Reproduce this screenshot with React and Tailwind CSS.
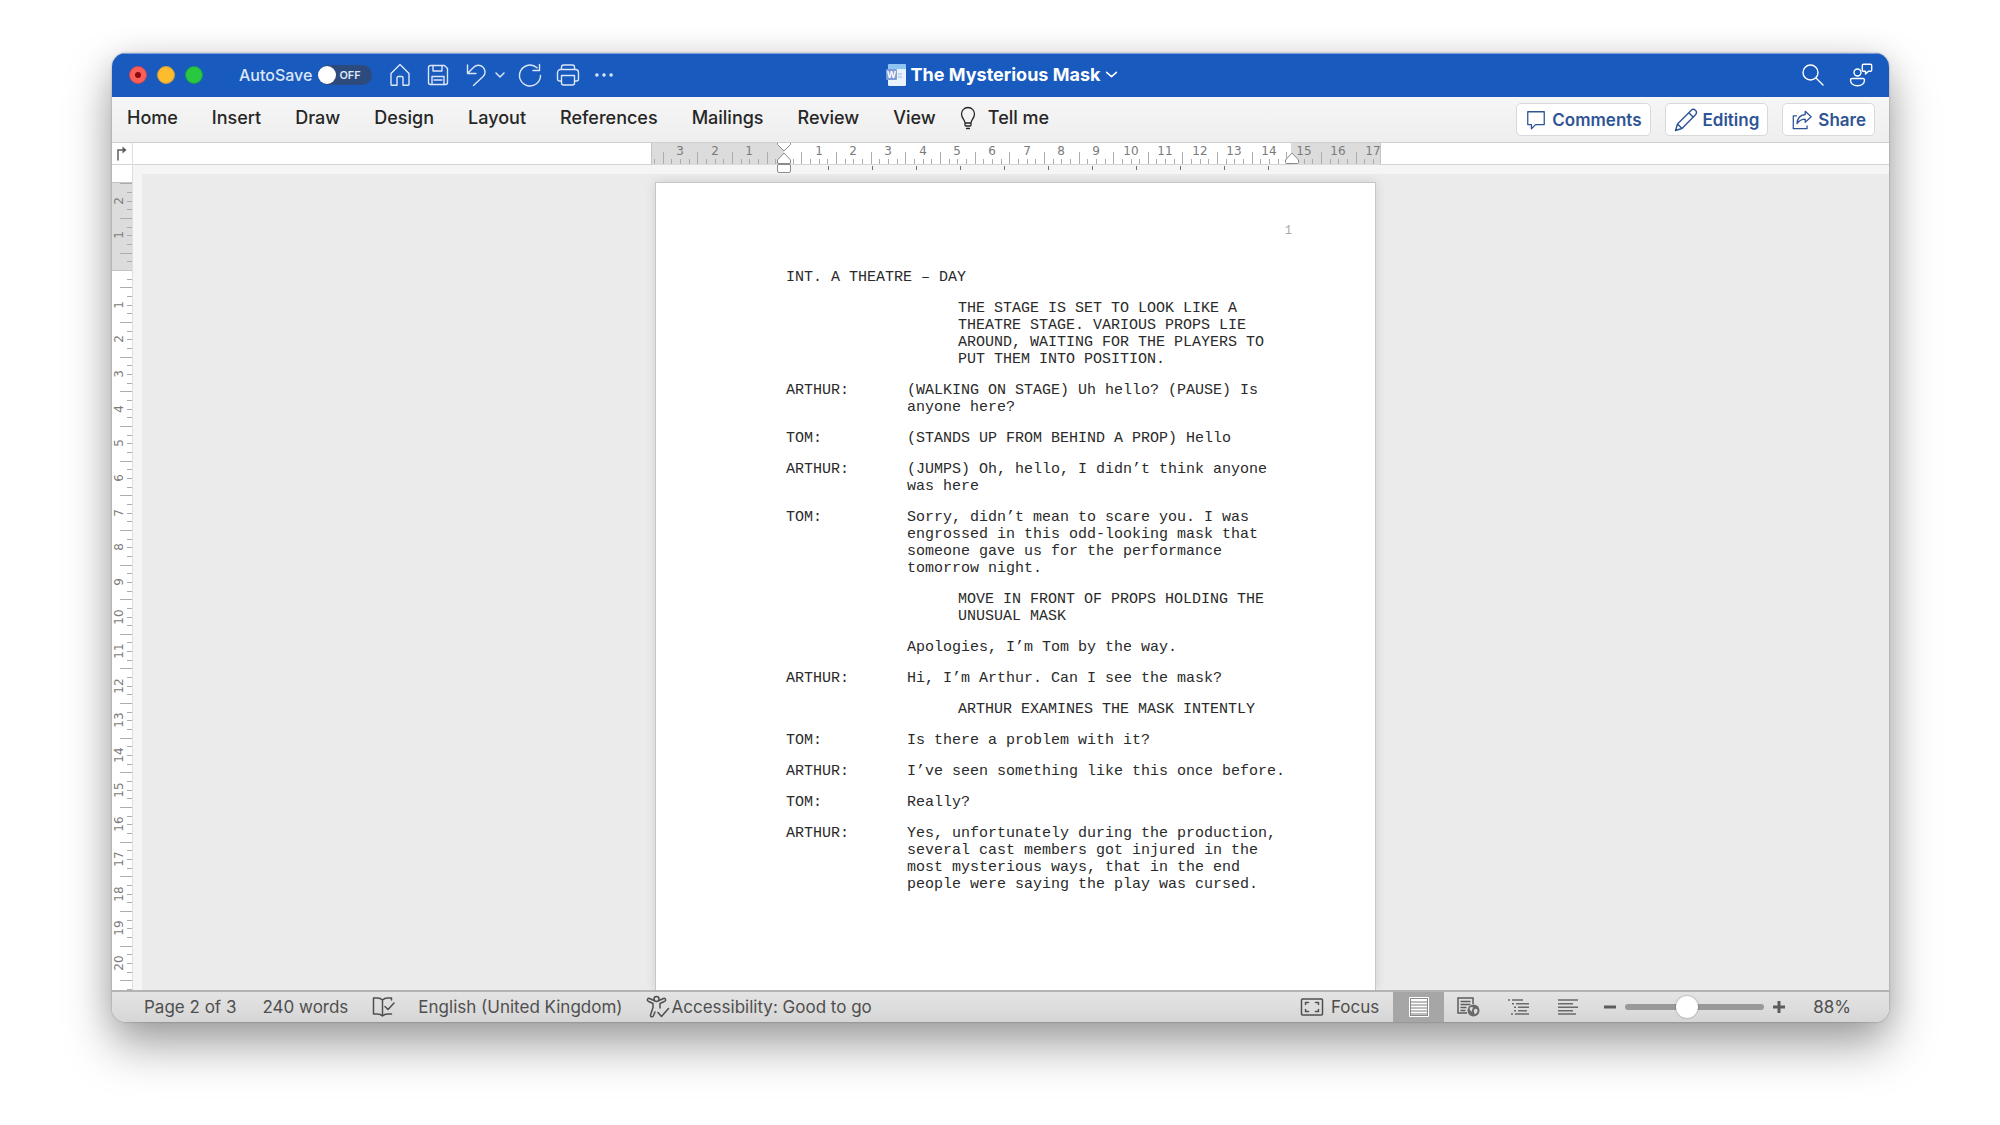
import React, { useState } from 'react';
import clsx from 'clsx';

const CM = 34.65; // one centimetre at 88% zoom
const TAB_STOP = 44;

const tabs = [
  'Home',
  'Insert',
  'Draw',
  'Design',
  'Layout',
  'References',
  'Mailings',
  'Review',
  'View',
];

const script = [
  { type: 'heading', text: 'INT. A THEATRE – DAY' },
  {
    type: 'direction',
    text: 'THE STAGE IS SET TO LOOK LIKE A\nTHEATRE STAGE. VARIOUS PROPS LIE\nAROUND, WAITING FOR THE PLAYERS TO\nPUT THEM INTO POSITION.',
  },
  {
    type: 'line',
    who: 'ARTHUR:',
    text: '(WALKING ON STAGE) Uh hello? (PAUSE) Is\nanyone here?',
  },
  { type: 'line', who: 'TOM:', text: '(STANDS UP FROM BEHIND A PROP) Hello' },
  {
    type: 'line',
    who: 'ARTHUR:',
    text: '(JUMPS) Oh, hello, I didn’t think anyone\nwas here',
  },
  {
    type: 'line',
    who: 'TOM:',
    text: 'Sorry, didn’t mean to scare you. I was\nengrossed in this odd-looking mask that\nsomeone gave us for the performance\ntomorrow night.',
  },
  {
    type: 'direction',
    text: 'MOVE IN FRONT OF PROPS HOLDING THE\nUNUSUAL MASK',
  },
  { type: 'line', who: '', text: 'Apologies, I’m Tom by the way.' },
  { type: 'line', who: 'ARTHUR:', text: 'Hi, I’m Arthur. Can I see the mask?' },
  { type: 'direction', text: 'ARTHUR EXAMINES THE MASK INTENTLY' },
  { type: 'line', who: 'TOM:', text: 'Is there a problem with it?' },
  {
    type: 'line',
    who: 'ARTHUR:',
    text: 'I’ve seen something like this once before.',
  },
  { type: 'line', who: 'TOM:', text: 'Really?' },
  {
    type: 'line',
    who: 'ARTHUR:',
    text: 'Yes, unfortunately during the production,\nseveral cast members got injured in the\nmost mysterious ways, that in the end\npeople were saying the play was cursed.',
  },
];

// Outline icon on a 24 grid
const Icon = ({ size = 24, stroke = 1.4, className, children }) => (
  <svg
    width={size}
    height={size}
    viewBox="0 0 24 24"
    fill="none"
    stroke="currentColor"
    strokeWidth={stroke}
    strokeLinecap="round"
    strokeLinejoin="round"
    className={clsx('shrink-0', className)}
    aria-hidden="true"
  >
    {children}
  </svg>
);

const IconButton = ({ label, className, children }) => (
  <button type="button" aria-label={label} className={clsx('flex items-center', className)}>
    {children}
  </button>
);

const TitleBar = ({ autoSave, setAutoSave }) => (
  <header className="grid h-[44px] shrink-0 grid-cols-[1fr_auto_1fr] items-center border-t border-[#7fa0dc] bg-[#185abd] pb-[2px] text-white">
    <div className="flex items-center">
      <div className="flex gap-[10px] pl-[17px]">
        <button
          type="button"
          aria-label="Close"
          className="flex size-[18px] items-center justify-center rounded-full border border-[#c9474f] bg-[#fc5f5a]"
        >
          <span className="size-[6px] rounded-full bg-[#8b0a0a]" />
        </button>
        <button
          type="button"
          aria-label="Minimise"
          className="size-[18px] rounded-full border border-[#c99a3f] bg-[#fdbc2e]"
        />
        <button
          type="button"
          aria-label="Zoom window"
          className="size-[18px] rounded-full border border-[#1d9a50] bg-[#29c840]"
        />
      </div>

      <label className="ml-9 flex items-center gap-[6px] text-[16px] leading-5 font-medium text-[#dbe6f8]">
        AutoSave
        <span className="relative flex items-center">
          <input
            type="checkbox"
            checked={autoSave}
            onChange={(e) => setAutoSave(e.target.checked)}
            className="h-[20px] w-[54px] appearance-none rounded-full bg-[#2d4a7c] before:block before:size-[18px] before:translate-y-px before:rounded-full before:bg-white checked:before:translate-x-[36px]"
          />
          <span className="pointer-events-none absolute left-[21px] text-[11px] leading-4 font-semibold">
            {autoSave ? 'ON' : 'OFF'}
          </span>
        </span>
      </label>

      <div className="ml-4 flex items-center gap-[14px] text-[#dbe6f8]">
        <IconButton label="Home">
          <Icon>
            <path d="M3 10.6 12 1.6l9 9V21.4a.8.8 0 0 1-.8.8H15v-7.4a1.3 1.3 0 0 0-1.3-1.3h-3.4A1.3 1.3 0 0 0 9 14.8V22.2H3.8a.8.8 0 0 1-.8-.8z" />
          </Icon>
        </IconButton>
        <IconButton label="Save">
          <Icon>
            <path d="M2.5 4.5a2 2 0 0 1 2-2h14l3 3v14a2 2 0 0 1-2 2h-15a2 2 0 0 1-2-2z" />
            <path d="M7 2.5v5.500h9V2.5M6 21.5v-8h12v8M8 17h8" />
          </Icon>
        </IconButton>
        <div className="flex items-center gap-[6px]">
          <IconButton label="Undo">
            <Icon>
              <path d="M3.5 2v8.5H12M3.7 10.2l6-6a6.6 6.6 0 0 1 9.4 9.4L9.5 22.5" />
            </Icon>
          </IconButton>
          <IconButton label="Undo history">
            <Icon size={12} stroke={3}>
              <path d="m4 8 8 8 8-8" />
            </Icon>
          </IconButton>
        </div>
        <IconButton label="Repeat" className="-ml-[2px]">
          <Icon>
            <path d="M22.5 12.5A10.5 10.5 0 1 1 19 4.7M21.5 1.5v6H15" />
          </Icon>
        </IconButton>
        <IconButton label="Print">
          <Icon>
            <path d="M5.5 6.5V4a2 2 0 0 1 2-2h9a2 2 0 0 1 2 2v2.5M5.5 18H3.5a2 2 0 0 1-2-2V9.5a3 3 0 0 1 3-3h15a3 3 0 0 1 3 3V16a2 2 0 0 1-2 2h-2" />
            <path d="M5.5 12.5h13V20a2 2 0 0 1-2 2h-9a2 2 0 0 1-2-2z" />
          </Icon>
        </IconButton>
        <IconButton label="More">
          <Icon size={20} className="fill-current">
            <circle cx="3.5" cy="12" r="1.4" />
            <circle cx="12" cy="12" r="1.4" />
            <circle cx="20.5" cy="12" r="1.4" />
          </Icon>
        </IconButton>
      </div>
    </div>

    <button type="button" className="flex items-center gap-[5px] pl-[3px]">
      <svg width="20" height="22" viewBox="0 0 20 22" className="shrink-0" aria-hidden="true">
        <rect x="2" y="0" width="18" height="22" rx="1.5" fill="#e9f3fd" />
        <path d="M3.5 0h15A1.5 1.5 0 0 1 20 1.5V5H2V1.5A1.5 1.5 0 0 1 3.5 0z" fill="#8fc3f2" />
        <path d="M12 10h4M12 13h4" stroke="#9db8e6" strokeWidth="1.2" />
        <rect x="0" y="5" width="11" height="11" rx="1" fill="#7f9bd8" />
        <text x="5.5" y="14" textAnchor="middle" fontSize="9" fontWeight="700" fill="#fff">
          W
        </text>
      </svg>
      <h1 className="text-[18px] leading-6 font-bold">The Mysterious Mask</h1>
      <Icon size={13} stroke={2.8}>
        <path d="m3 8 9 8 9-8" />
      </Icon>
    </button>

    <div className="flex items-center justify-end gap-6 pr-4">
      <IconButton label="Search">
        <Icon>
          <circle cx="9.5" cy="9.5" r="7.5" />
          <path d="m15 15 7 7" />
        </Icon>
      </IconButton>
      <IconButton label="Share presence">
        <Icon>
          <circle cx="8.5" cy="9.5" r="3.5" />
          <path d="M3 15.5h11a1.5 1.5 0 0 1 1.5 1.5c0 3.5-3 5.8-7 5.8S1.5 20.5 1.5 17A1.5 1.5 0 0 1 3 15.5z" />
          <path d="M14.5 1.2h7a1.2 1.2 0 0 1 1.2 1.2V7a1.2 1.2 0 0 1-1.2 1.2h-2L16.5 11V8.2h-2A1.2 1.2 0 0 1 13.3 7V2.4a1.2 1.2 0 0 1 1.2-1.2z" />
        </Icon>
      </IconButton>
    </div>
  </header>
);

const ActionButton = ({ icon, children }) => (
  <button
    type="button"
    className="flex h-[33px] items-center gap-[5px] rounded-[5px] border border-[#d9d9d9] bg-white px-2 text-[17px] leading-5 font-semibold text-[#2f5496]"
  >
    {icon}
    {children}
  </button>
);

const Ribbon = () => (
  <nav className="flex h-[45px] shrink-0 items-center justify-between bg-linear-to-b from-[#f6f6f6] to-[#eeeeee] pr-[14px] pl-[15px] text-[18px] leading-6 font-medium text-[#262626]">
    <div className="flex items-center gap-[34px] pb-1">
      {tabs.map((tab) => (
        <button key={tab} type="button">
          {tab}
        </button>
      ))}
      <button type="button" className="-ml-[14px] flex items-center gap-2">
        <Icon stroke={1.3}>
          <path d="M9 17c0-3-3.500-4.500-3.500-9a6.500 6.500 0 0 1 13 0c0 4.500-3.500 6-3.500 9v2a1 1 0 0 1-1 1h-4a1 1 0 0 1-1-1zM9 17h6M10.500 22.500h3" />
        </Icon>
        Tell me
      </button>
    </div>

    <div className="flex items-center gap-[14px]">
      <ActionButton
        icon={
          <Icon size={22}>
            <path d="M3 3h18v14h-9.500L7 21.500V17H3z" />
          </Icon>
        }
      >
        Comments
      </ActionButton>
      <ActionButton
        icon={
          <Icon size={24}>
            <path d="M1.500 22.500 3.500 16 17 2.500a2.800 2.800 0 0 1 4.500 4.200L8 20.500zM14.800 4.700l4.500 4.500M3.500 16l4.500 4.500" />
          </Icon>
        }
      >
        Editing
      </ActionButton>
      <ActionButton
        icon={
          <Icon size={22}>
            <path d="M6 7.500H2.500v14h15v-3" />
            <path d="M15.500 2.500 22 8.500l-6.500 6v-3.500c-4 0-6.500 1.500-9 5 .5-6 3.500-9.500 9-10z" />
          </Icon>
        }
      >
        Share
      </ActionButton>
    </div>
  </nav>
);

const range = (from, to) => Array.from({ length: to - from + 1 }, (_, i) => from + i);

const HorizontalRuler = () => {
  const zero = 133;
  const quarters = range(-15, 68);
  return (
    <svg width="729" height="32" className="shrink-0 self-start overflow-visible" aria-hidden="true">
      <rect width={zero} height="22" fill="#dcdcdc" />
      <rect x="640" width="90" height="22" fill="#dcdcdc" />
      <path d="M.5 0v22M729.5 0v22" stroke="#c4c4c4" />
      {quarters.map((q) => {
        const long = q % 4 === 2 || q % 4 === -2;
        const x = Math.round(zero + (q * CM) / 4);
        return (
          q !== 0 && <rect key={q} x={x} y={long ? 9 : 16} width="1" height={long ? 12 : 5} fill="#adadad" />
        );
      })}
      {range(-3, 17)
        .filter((n) => n !== 0)
        .map((n) => (
          <text
            key={n}
            x={Math.round(zero + n * CM)}
            y="12"
            textAnchor="middle"
            fontSize="12"
            fill="#7b7b7b"
            className="font-['DejaVu_Sans',sans-serif]"
          >
            {Math.abs(n)}
          </text>
        ))}
      {range(1, 11).map((n) => (
        <rect key={n} x={zero + n * TAB_STOP} y="23" width="1" height="4" fill="#6e6e6e" />
      ))}
      {/* indent markers */}
      <g fill="#fff" stroke="#8a8a8a">
        <path d="M126.500 0v1.500l6.500 6.500 6.500-6.500V0" />
        <path d="M133 10l6.500 7v3.500h-13V17z" />
        <rect x="126.500" y="21.500" width="13" height="8" rx="1.500" />
        <path d="M641 10l6.500 7v2.500a1 1 0 0 1-1 1h-11a1 1 0 0 1-1-1V17z" />
      </g>
    </svg>
  );
};

const VerticalRuler = () => {
  const zero = 88;
  return (
    <svg width="21" height="820" className="shrink-0" aria-hidden="true">
      <rect width="21" height="88" fill="#dcdcdc" />
      <path d="M0 .5h21M0 88.500h21" stroke="#c4c4c4" />
      {range(-10, 84).map((q) => {
        const long = q % 4 === 2 || q % 4 === -2;
        return (
          q !== 0 && (
            <rect
              key={q}
              x={long ? 8 : 15}
              y={Math.round(zero + (q * CM) / 4)}
              width={long ? 12 : 5}
              height="1"
              fill="#adadad"
            />
          )
        );
      })}
      {range(-2, 20)
        .filter((n) => n !== 0)
        .map((n) => {
          const y = Math.round(zero + n * CM);
          return (
            <text
              key={n}
              x="11"
              y={y}
              transform={`rotate(-90 11 ${y})`}
              textAnchor="middle"
              fontSize="12"
              fill="#7b7b7b"
              className="font-['DejaVu_Sans',sans-serif]"
            >
              {Math.abs(n)}
            </text>
          );
        })}
    </svg>
  );
};

const Page = () => (
  <article className="w-[721px] shrink-0 border border-b-0 border-[#c6c6c6] bg-white pt-[40px] pr-[83px] pl-[130px] font-['Liberation_Mono',monospace] text-[15px] leading-[17px] text-[#2a2a2a] shadow-[0_0_10px_rgba(0,0,0,0.12)]">
    <p className="text-right text-[12px] text-[#a8a8a8]">1</p>
    <div className="mt-[29px] flex flex-col gap-[14px] whitespace-pre">
      {script.map((item, i) => {
        if (item.type === 'heading') return <h2 key={i}>{item.text}</h2>;
        if (item.type === 'direction')
          return (
            <p key={i} className="pl-[172px]">
              {item.text}
            </p>
          );
        return (
          <div key={i} className="flex">
            <p className="w-[121px] shrink-0">{item.who}</p>
            <p>{item.text}</p>
          </div>
        );
      })}
    </div>
  </article>
);

const Workspace = () => (
  <main className="flex min-h-0 flex-1 border-t border-[#cfcfcf]">
    {/* tab selector + vertical ruler */}
    <div className="flex w-[21px] shrink-0 flex-col overflow-hidden border-r border-[#dedede] bg-white">
      <button
        type="button"
        aria-label="Tab selector"
        className="flex h-[22px] w-full shrink-0 items-center justify-center border-b border-[#d4d4d4]"
      >
        <svg width="10" height="15" viewBox="0 0 10 15" fill="none" stroke="#5c5c5c" aria-hidden="true">
          <path d="M1 14.500V4h5" strokeWidth="1.500" />
          <path d="M5.500.5 9.500 4l-4 3.500z" fill="#5c5c5c" stroke="none" />
        </svg>
      </button>
      <div className="mt-[17px] flex min-h-0 flex-1 flex-col overflow-hidden">
        <VerticalRuler />
      </div>
    </div>

    <div className="flex min-w-0 flex-1 flex-col bg-[#f5f5f5]">
      <div className="flex h-[22px] shrink-0 justify-center border-b border-[#d4d4d4] bg-white pl-[9px]">
        <HorizontalRuler />
      </div>
      <div className="mt-[9px] ml-[9px] flex min-h-0 flex-1 justify-center overflow-hidden bg-[#ebebeb] pt-2">
        <Page />
      </div>
    </div>
  </main>
);

const StatusBar = ({ zoom, setZoom }) => (
  <footer className="flex h-[32px] shrink-0 items-center justify-between border-t-2 border-[#b4b4b4] bg-linear-to-b from-[#e4e4e4] to-[#d6d6d6] text-[17px] leading-5 text-[#4f4f4f]">
    <div className="flex items-center pl-8">
      <button type="button">Page 2 of 3</button>
      <button type="button" className="ml-[26px]">
        240 words
      </button>
      <IconButton label="Proofing" className="ml-[23px]">
        <Icon stroke={1.5}>
          <path d="M11.500 5c-1.500-1.500-3-2-5-2h-4v16h4c2 0 3.500.5 5 2 1.500-1.500 3-2 5-2h4M11.500 5v16M11.500 5c1.500-1.500 3-2 5-2h4v2M14 11.500l3 3 6-6.500" />
        </Icon>
      </IconButton>
      <button type="button" className="ml-[23px]">
        English (United Kingdom)
      </button>
      <button type="button" className="ml-[23px] flex items-center gap-[2px]">
        <Icon stroke={1.5}>
          <circle cx="10.500" cy="4" r="2.500" />
          <path d="M8 5.500 3.500 3.500a1.500 1.500 0 0 0-1.300 2.700L7 8.500v4L4.500 20a1.500 1.500 0 0 0 2.800 1L9 17M13 5.500l4.500-2a1.500 1.500 0 0 1 1.300 2.700L14 8.500V13M12 17.500l3.500 4 7-8" />
        </Icon>
        Accessibility: Good to go
      </button>
    </div>

    <div className="flex h-full items-center pr-[38px]">
      <button type="button" className="flex items-center gap-[7px] pr-[14px]">
        <Icon size={24} stroke={1.5}>
          <rect x="1.500" y="4" width="21" height="16" rx="1" />
          <path d="M5.500 9.500v-2h3M15.500 7.500h3v2M5.500 14.500v2h3M15.500 16.500h3v-2" />
        </Icon>
        Focus
      </button>
      <button
        type="button"
        aria-label="Print layout"
        aria-pressed="true"
        className="flex h-full w-[51px] items-center justify-center bg-[#a6a6a6]"
      >
        <svg width="20" height="20" viewBox="0 0 20 20" aria-hidden="true">
          <rect x="0" y="0" width="20" height="20" rx="1" fill="#fff" />
          <rect x="1.500" y="1.500" width="17" height="17" fill="none" stroke="#8a8a8a" />
          <path d="M2 5h16M2 8h16M2 11h16M2 14h16M2 17h16" stroke="#7a7a7a" />
        </svg>
      </button>
      <IconButton label="Web layout" className="ml-[13px]">
        <svg width="23" height="20" viewBox="0 0 23 20" fill="none" stroke="#5c5c5c" aria-hidden="true">
          <path d="M10 16H1V1h15v6" strokeWidth="1.500" />
          <path d="M3.500 4.500h10M3.500 7.500h10M3.500 10.500h6M3.500 13.500h5" strokeWidth="1.300" />
          <circle cx="16.500" cy="13.500" r="6" fill="#6a6a6a" stroke="none" />
          <path d="M13 10.500c1.500-1 3-.5 3 .5s-1.500 1-1 2.500-1 1-1.500 0-1.500-2-.5-3zM18 12c1.500-.5 2.500.5 2.500 2s-1.500 3-2.500 3-.5-1.500-1-2.500 0-2 1-2.500z" fill="#dcdcdc" stroke="none" />
        </svg>
      </IconButton>
      <IconButton label="Outline" className="ml-7">
        <svg width="21" height="16" viewBox="0 0 21 16" stroke="#6a6a6a" strokeWidth="1.600" aria-hidden="true">
          <path d="M0 1h2M4 1h11M4 4.700h2M8 4.700h13M6 8.300h2M10 8.300h11M6 11.700h2M10 11.700h9M3 15h2M7 15h14" />
        </svg>
      </IconButton>
      <IconButton label="Draft" className="ml-[29px]">
        <svg width="20" height="16" viewBox="0 0 20 16" stroke="#6a6a6a" strokeWidth="1.600" aria-hidden="true">
          <path d="M0 1h20M0 4.700h15M0 8.300h20M0 11.700h15M0 15h18" />
        </svg>
      </IconButton>
      <IconButton label="Zoom out" className="ml-[26px]">
        <svg width="12" height="12" viewBox="0 0 12 12" stroke="#5c5c5c" strokeWidth="3" aria-hidden="true">
          <path d="M0 6h12" />
        </svg>
      </IconButton>
      <input
        type="range"
        aria-label="Zoom"
        min="10"
        max="190"
        value={zoom}
        onChange={(e) => setZoom(Number(e.target.value))}
        className="mx-[9px] h-[24px] w-[139px] appearance-none bg-transparent [&::-webkit-slider-runnable-track]:h-[6px] [&::-webkit-slider-runnable-track]:rounded-full [&::-webkit-slider-runnable-track]:bg-[#999999] [&::-webkit-slider-thumb]:mt-[-8px] [&::-webkit-slider-thumb]:size-[22px] [&::-webkit-slider-thumb]:appearance-none [&::-webkit-slider-thumb]:rounded-full [&::-webkit-slider-thumb]:bg-white [&::-webkit-slider-thumb]:shadow-[0_0_2px_rgba(0,0,0,0.4)]"
      />
      <IconButton label="Zoom in">
        <svg width="12" height="12" viewBox="0 0 12 12" stroke="#5c5c5c" strokeWidth="3" aria-hidden="true">
          <path d="M0 6h12M6 0v12" />
        </svg>
      </IconButton>
      <button type="button" className="ml-7">
        {zoom}%
      </button>
    </div>
  </footer>
);

const App = () => {
  const [autoSave, setAutoSave] = useState(false);
  const [zoom, setZoom] = useState(88);

  return (
    <div className="h-screen bg-white pt-[53px] pr-[111px] pb-[103px] pl-[112px] font-['Inter',sans-serif]">
      <div className="flex h-full flex-col overflow-hidden rounded-[14px] shadow-[0_0_2px_rgba(0,0,0,0.35),0_4px_32px_rgba(0,0,0,0.12),0_24px_48px_rgba(0,0,0,0.34)]">
        <TitleBar autoSave={autoSave} setAutoSave={setAutoSave} />
        <Ribbon />
        <Workspace />
        <StatusBar zoom={zoom} setZoom={setZoom} />
      </div>
    </div>
  );
};

export default App;
